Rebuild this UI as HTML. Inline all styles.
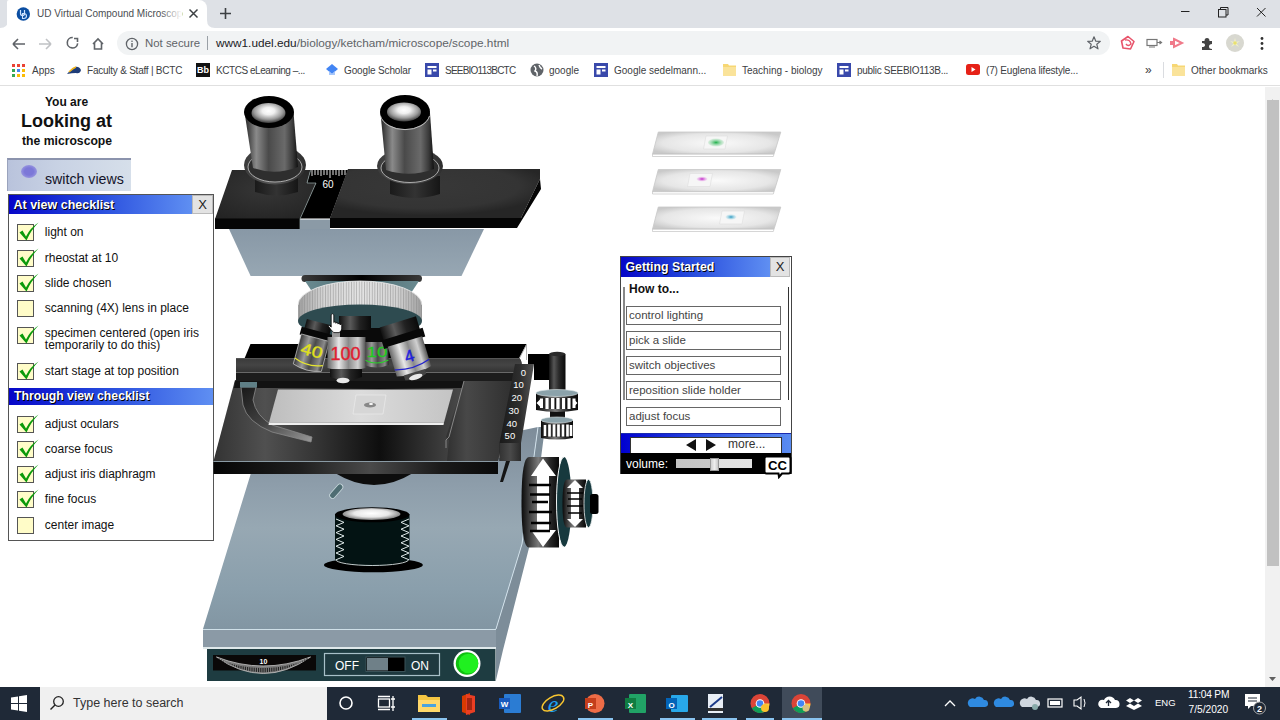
<!DOCTYPE html>
<html><head><meta charset="utf-8">
<style>
*{margin:0;padding:0;box-sizing:border-box}
html,body{width:1280px;height:720px;overflow:hidden;background:#fff;font-family:"Liberation Sans",sans-serif;position:relative}
.abs{position:absolute}
#tabstrip{left:0;top:0;width:1280px;height:28px;background:#dee1e6}
#tab{left:7px;top:0px;width:200px;height:29px;background:#fff;border-radius:2px 8px 0 0}
#toolbar{left:0;top:28px;width:1280px;height:30px;background:#fff}
#omni{left:117px;top:31px;width:993px;height:24px;background:#f1f3f4;border-radius:12px}
#bm{left:0;top:58px;width:1280px;height:28px;background:#fff;border-bottom:1px solid #e0e0e0}
.t{position:absolute;white-space:nowrap;line-height:1}
.bmt{font-size:10px;color:#3c4043;top:65.7px}
#page{left:0;top:87px;width:1280px;height:600px;background:#fff}
#taskbar{left:0;top:687px;width:1280px;height:33px;background:#1f2937}
.panel{position:absolute;background:#fff;border:1px solid #555}
.hdr{position:absolute;background:linear-gradient(90deg,#0606c8 0%,#2448dc 45%,#5f8ff2 100%);color:#fff;font-weight:bold;font-size:12px;text-shadow:1px 1px 0.5px #000;line-height:14px}
.xbtn{position:absolute;background:#e3e3e3;border:1px solid #bbb;color:#222;font-size:13px;text-align:center}
.row{position:absolute;left:44.8px;font-size:12px;color:#111;line-height:12.5px;white-space:nowrap}
.cb{position:absolute;left:17px;width:17px;height:17px;background:#fffcc8;border:1.5px solid #555}
.htbtn{position:absolute;left:626px;width:155px;height:19px;border:1px solid #666;background:#fff;font-size:11.5px;color:#444;padding-left:2px;line-height:17px;white-space:nowrap}
</style></head><body>
<div id="page" class="abs"></div>
<!-- ===== CHROME ===== -->
<div id="tabstrip" class="abs"></div>
<div id="tab" class="abs"></div>
<svg class="abs" style="left:0;top:20px" width="8" height="8"><path d="M0 8 L8 8 L8 0 Q8 8 0 8Z" fill="#fff"/></svg>
<svg class="abs" style="left:207px;top:20px" width="8" height="8"><path d="M0 0 Q0 8 8 8 L0 8Z" fill="#fff"/></svg>
<svg class="abs" style="left:16px;top:6.5px" width="15" height="15"><circle cx="7.3" cy="7" r="6.7" fill="#0b4ea2"/><path d="M4.5 3V6.5Q4.5 8.5 6.5 8.5Q8.5 8.5 8.5 6.5V3" fill="none" stroke="#cfe3ff" stroke-width="1.2"/><path d="M6.5 6.5V11.5H7.5Q10.5 11.5 10.5 9Q10.5 6.5 7.5 6.5Z" fill="none" stroke="#cfe3ff" stroke-width="1.1"/></svg>
<div class="t" style="left:37px;top:9.3px;font-size:10px;color:#4a4d52;width:146px;overflow:hidden">UD Virtual Compound Microscope</div>
<div class="abs" style="left:160px;top:4px;width:22px;height:20px;background:linear-gradient(90deg,rgba(255,255,255,0),#fff)"></div>
<svg class="abs" style="left:188px;top:8px" width="11" height="11"><path d="M1.5 1.5L9.5 9.5M9.5 1.5L1.5 9.5" stroke="#3c4043" stroke-width="1.5"/></svg>
<svg class="abs" style="left:219px;top:7px" width="13" height="13"><path d="M6.5 1V12M1 6.5H12" stroke="#3c4043" stroke-width="1.6"/></svg>
<svg class="abs" style="left:1176px;top:4px" width="104" height="16"><path d="M5 7.5H13.5" stroke="#222" stroke-width="1"/><rect x="42.5" y="5.5" width="7.5" height="7.5" fill="none" stroke="#222" stroke-width="1"/><path d="M44.5 5.5V3.5H52V11H50" fill="none" stroke="#222" stroke-width="1"/><path d="M81 4L89.5 12.5M89.5 4L81 12.5" stroke="#222" stroke-width="1"/></svg>
<div id="toolbar" class="abs"></div>
<svg class="abs" style="left:10px;top:36px" width="100" height="16">
 <path d="M3 8H15M3 8L8 3M3 8L8 13" stroke="#5f6368" stroke-width="1.6" fill="none"/>
 <path d="M29 8H41M41 8L36 3M41 8L36 13" stroke="#c0c2c5" stroke-width="1.6" fill="none"/>
 <path d="M66.5 4.2A5.2 5.2 0 1 0 66.5 11.8" stroke="#5f6368" stroke-width="1.6" fill="none" transform="rotate(-40 61 8)"/>
 <path d="M64 2.5L67.5 2.5L67.5 6" stroke="#5f6368" stroke-width="1.6" fill="none"/>
 <path d="M83 8L88 3L93 8M84.5 7V13H91.5V7" stroke="#5f6368" stroke-width="1.6" fill="none"/>
</svg>
<div id="omni" class="abs"></div>
<svg class="abs" style="left:125px;top:36.5px" width="14" height="14"><circle cx="7" cy="7" r="5.6" fill="none" stroke="#5f6368" stroke-width="1.3"/><path d="M7 6V10.3" stroke="#5f6368" stroke-width="1.4"/><circle cx="7" cy="4.2" r="0.8" fill="#5f6368"/></svg>
<div class="t" style="left:145px;top:38px;font-size:11.4px;color:#5f6368">Not secure</div>
<div class="abs" style="left:207px;top:36px;width:1px;height:14px;background:#9aa0a6"></div>
<div class="t" style="left:216px;top:37.8px;font-size:11.8px;color:#202124;letter-spacing:0">www1.udel.edu<span style="color:#5f6368">/biology/ketcham/microscope/scope.html</span></div>
<svg class="abs" style="left:1086px;top:35px" width="16" height="16"><path d="M8 1.8L9.8 6.2L14.3 6.4L10.8 9.3L12 13.8L8 11.3L4 13.8L5.2 9.3L1.7 6.4L6.2 6.2Z" fill="none" stroke="#5f6368" stroke-width="1.2" stroke-linejoin="round"/></svg>
<svg class="abs" style="left:1118px;top:33px" width="156" height="20">
 <path d="M10 3.5L16 8.5L12.5 16L5 15L3.5 8Z" fill="none" stroke="#e8546b" stroke-width="1.6" stroke-linejoin="round"/><path d="M7 7Q12 6 13 11Q10 14 8 11" fill="none" stroke="#e8546b" stroke-width="1.4"/>
 <rect x="29" y="6.5" width="10" height="6" fill="none" stroke="#777" stroke-width="1.2"/><path d="M31 14H37M39 9.5H43M41.5 8L43.5 9.5L41.5 11" stroke="#777" stroke-width="1.2" fill="none"/>
 <path d="M56 6L64 10L56 14Z" fill="none" stroke="#f07a8a" stroke-width="2"/><rect x="52" y="8" width="4" height="4" fill="#f07a8a"/>
 <path d="M84 8H86.5Q86.5 5 89 5Q91.5 5 91.5 8H94V11Q91 11 91 13.5Q91 16 94 16V17H84V14Q87 14 87 12Q87 10 84 10Z" fill="#444"/>
 <circle cx="117" cy="10" r="9" fill="#d8d8d0"/><path d="M117 5L118 9L122 8L118.5 10.5L121 14L117 11.5L113 14L115.5 10.5L112 8L116 9Z" fill="#f2f2c8"/><circle cx="117" cy="10" r="1.8" fill="#e8e070"/>
 <circle cx="144" cy="5.5" r="1.4" fill="#333"/><circle cx="144" cy="10.5" r="1.4" fill="#333"/><circle cx="144" cy="15.5" r="1.4" fill="#333"/>
</svg>
<div id="bm" class="abs"></div>
<svg class="abs" style="left:12px;top:64px" width="13" height="13">
 <rect x="0" y="0" width="3" height="3" fill="#ea4335"/><rect x="5" y="0" width="3" height="3" fill="#ea4335"/><rect x="10" y="0" width="3" height="3" fill="#ea4335"/>
 <rect x="0" y="5" width="3" height="3" fill="#34a853"/><rect x="5" y="5" width="3" height="3" fill="#4285f4"/><rect x="10" y="5" width="3" height="3" fill="#fbbc05"/>
 <rect x="0" y="10" width="3" height="3" fill="#34a853"/><rect x="5" y="10" width="3" height="3" fill="#fbbc05"/><rect x="10" y="10" width="3" height="3" fill="#fbbc05"/>
</svg>
<div class="t bmt" style="left:32px">Apps</div>
<svg class="abs" style="left:67px;top:65px" width="14" height="10"><path d="M0 9Q4 4 8 2Q12 1 14 5Q13 9 9 8Q5 8 0 9Z" fill="#1e3c78"/><path d="M2 7Q6 3 9 2" stroke="#f2b51d" stroke-width="1.5" fill="none"/></svg>
<div class="t bmt" style="left:87px;letter-spacing:-0.23px">Faculty &amp; Staff | BCTC</div>
<div class="abs" style="left:196px;top:63px;width:14px;height:14px;background:#111;color:#fff;font-size:9px;font-weight:bold;line-height:14px;text-align:center">Bb</div>
<div class="t bmt" style="left:216px;letter-spacing:-0.45px">KCTCS eLearning –...</div>
<svg class="abs" style="left:325px;top:63px" width="14" height="14"><path d="M7 1L13 6L7 11L1 6Z" fill="#4285f4"/><path d="M4 8L7 11L10 8V12H4Z" fill="#a8c7fa"/></svg>
<div class="t bmt" style="left:344px;letter-spacing:-0.14px">Google Scholar</div>
<svg class="abs" style="left:425px;top:63px" width="14" height="14"><rect x="0" y="0" width="14" height="14" fill="#3949ab"/><rect x="2.5" y="3" width="9" height="2" fill="#fff"/><rect x="2.5" y="6.5" width="4" height="5" fill="#fff"/><rect x="8" y="6.5" width="3.5" height="2" fill="#fff"/></svg>
<div class="t bmt" style="left:445px;letter-spacing:-0.77px">SEEBIO113BCTC</div>
<svg class="abs" style="left:530px;top:63px" width="14" height="14"><circle cx="7" cy="7" r="6.5" fill="#5f6368"/><path d="M4 3Q7 5 5 8Q8 9 7 13M9 2Q10 5 12 6" stroke="#fff" stroke-width="1.4" fill="none"/></svg>
<div class="t bmt" style="left:549px">google</div>
<svg class="abs" style="left:594px;top:63px" width="14" height="14"><rect x="0" y="0" width="14" height="14" fill="#3949ab"/><rect x="2.5" y="3" width="9" height="2" fill="#fff"/><rect x="2.5" y="6.5" width="4" height="5" fill="#fff"/><rect x="8" y="6.5" width="3.5" height="2" fill="#fff"/></svg>
<div class="t bmt" style="left:614px">Google sedelmann...</div>
<svg class="abs" style="left:723px;top:63px" width="13" height="14"><path d="M0 1H5L6 2.5H13V13H0Z" fill="#f7d774"/><path d="M0 4H13V13H0Z" fill="#fae39a"/></svg>
<div class="t bmt" style="left:742px">Teaching - biology</div>
<svg class="abs" style="left:837px;top:63px" width="14" height="14"><rect x="0" y="0" width="14" height="14" fill="#3949ab"/><rect x="2.5" y="3" width="9" height="2" fill="#fff"/><rect x="2.5" y="6.5" width="4" height="5" fill="#fff"/><rect x="8" y="6.5" width="3.5" height="2" fill="#fff"/></svg>
<div class="t bmt" style="left:857px;letter-spacing:-0.3px">public SEEBIO113B...</div>
<svg class="abs" style="left:966px;top:64px" width="14" height="11"><rect x="0" y="0" width="14" height="11" rx="2.5" fill="#e62117"/><path d="M5.5 3L9.5 5.5L5.5 8Z" fill="#fff"/></svg>
<div class="t bmt" style="left:986px;letter-spacing:-0.17px">(7) Euglena lifestyle...</div>
<div class="t" style="left:1145px;top:64px;font-size:12px;color:#3c4043">»</div>
<div class="abs" style="left:1163px;top:62px;width:1px;height:16px;background:#dadce0"></div>
<svg class="abs" style="left:1172px;top:63px" width="13" height="14"><path d="M0 1H5L6 2.5H13V13H0Z" fill="#f7d774"/><path d="M0 4H13V13H0Z" fill="#fae39a"/></svg>
<div class="t bmt" style="left:1191px">Other bookmarks</div>
<!-- ===== LEFT PANEL ===== -->
<div class="t" style="left:45px;top:96px;font-size:12px;font-weight:bold;color:#111">You are</div>
<div class="t" style="left:21px;top:112px;font-size:18px;font-weight:bold;color:#111">Looking at</div>
<div class="t" style="left:22px;top:135px;font-size:12.2px;font-weight:bold;color:#111">the microscope</div>
<div class="abs" style="left:7px;top:158px;width:124px;height:33px;background:linear-gradient(90deg,#b9c3dc 0%,#c8d2e4 40%,#d6dfea 100%);border-top:2px solid #8b93ad;border-left:1px solid #9aa3bd"></div>
<div class="abs" style="left:21px;top:165px;width:16px;height:13px;border-radius:50%;background:radial-gradient(#7c78d8 40%,#9a98e0 75%,rgba(180,180,230,0) 100%)"></div>
<div class="t" style="left:45px;top:172px;font-size:14.2px;color:#14142a">switch views</div>

<div class="panel" style="left:8px;top:194px;width:206px;height:347px"></div>
<div class="hdr" style="left:9px;top:195px;width:183px;height:19px;padding:3px 0 0 4.5px;font-size:12.5px">At view checklist</div>
<div class="xbtn" style="left:192px;top:195px;width:21px;height:19px;line-height:17px">X</div>
<div class="hdr" style="left:9px;top:387.5px;width:204px;height:17px;padding:1.5px 0 0 5px;font-size:12.25px">Through view checklist</div>
<div class="cb" style="top:223.5px"></div>
<svg class="abs" style="left:17px;top:219.5px" width="24" height="22"><path d="M2.5 12.5L5.5 10.5L9 16.5Q13 8 21.5 2.5Q14 10 9.5 20.5Z" fill="#0a9a0a"/></svg>
<div class="row" style="top:225.7px">light on</div>
<div class="cb" style="top:249.5px"></div>
<svg class="abs" style="left:17px;top:245.5px" width="24" height="22"><path d="M2.5 12.5L5.5 10.5L9 16.5Q13 8 21.5 2.5Q14 10 9.5 20.5Z" fill="#0a9a0a"/></svg>
<div class="row" style="top:251.7px">rheostat at 10</div>
<div class="cb" style="top:274.5px"></div>
<svg class="abs" style="left:17px;top:270.5px" width="24" height="22"><path d="M2.5 12.5L5.5 10.5L9 16.5Q13 8 21.5 2.5Q14 10 9.5 20.5Z" fill="#0a9a0a"/></svg>
<div class="row" style="top:276.7px">slide chosen</div>
<div class="cb" style="top:299.5px"></div>
<div class="row" style="top:301.7px">scanning (4X) lens in place</div>
<div class="cb" style="top:326.5px"></div>
<svg class="abs" style="left:17px;top:322.5px" width="24" height="22"><path d="M2.5 12.5L5.5 10.5L9 16.5Q13 8 21.5 2.5Q14 10 9.5 20.5Z" fill="#0a9a0a"/></svg>
<div class="row" style="top:326.5px">specimen centered (open iris<br>temporarily to do this)</div>
<div class="cb" style="top:362.5px"></div>
<svg class="abs" style="left:17px;top:358.5px" width="24" height="22"><path d="M2.5 12.5L5.5 10.5L9 16.5Q13 8 21.5 2.5Q14 10 9.5 20.5Z" fill="#0a9a0a"/></svg>
<div class="row" style="top:364.7px">start stage at top position</div>
<div class="cb" style="top:415.5px"></div>
<svg class="abs" style="left:17px;top:411.5px" width="24" height="22"><path d="M2.5 12.5L5.5 10.5L9 16.5Q13 8 21.5 2.5Q14 10 9.5 20.5Z" fill="#0a9a0a"/></svg>
<div class="row" style="top:417.7px">adjust oculars</div>
<div class="cb" style="top:440.5px"></div>
<svg class="abs" style="left:17px;top:436.5px" width="24" height="22"><path d="M2.5 12.5L5.5 10.5L9 16.5Q13 8 21.5 2.5Q14 10 9.5 20.5Z" fill="#0a9a0a"/></svg>
<div class="row" style="top:442.7px">coarse focus</div>
<div class="cb" style="top:465.5px"></div>
<svg class="abs" style="left:17px;top:461.5px" width="24" height="22"><path d="M2.5 12.5L5.5 10.5L9 16.5Q13 8 21.5 2.5Q14 10 9.5 20.5Z" fill="#0a9a0a"/></svg>
<div class="row" style="top:467.7px">adjust iris diaphragm</div>
<div class="cb" style="top:491.0px"></div>
<svg class="abs" style="left:17px;top:487.0px" width="24" height="22"><path d="M2.5 12.5L5.5 10.5L9 16.5Q13 8 21.5 2.5Q14 10 9.5 20.5Z" fill="#0a9a0a"/></svg>
<div class="row" style="top:493.2px">fine focus</div>
<div class="cb" style="top:516.5px"></div>
<div class="row" style="top:518.7px">center image</div>
<!-- ===== MICROSCOPE ===== -->
<svg class="abs" style="left:195px;top:88px" width="420" height="599" viewBox="195 88 420 599">
<defs>
 <linearGradient id="baseTop" x1="0" y1="0" x2="0" y2="1">
  <stop offset="0" stop-color="#7d8c99"/><stop offset="0.3" stop-color="#8e9eab"/><stop offset="0.5" stop-color="#97a8b3"/><stop offset="0.8" stop-color="#8a9fac"/><stop offset="1" stop-color="#8296a3"/>
 </linearGradient>
 <linearGradient id="bodyG" x1="0" y1="0" x2="0" y2="1"><stop offset="0" stop-color="#8898a6"/><stop offset="1" stop-color="#97a7b3"/></linearGradient>
 <linearGradient id="eyeBody" x1="0" y1="0" x2="1" y2="0">
  <stop offset="0" stop-color="#222"/><stop offset="0.22" stop-color="#8a8a8a"/><stop offset="0.45" stop-color="#4a4a4a"/><stop offset="0.75" stop-color="#6a6a6a"/><stop offset="0.9" stop-color="#3a3a3a"/><stop offset="1" stop-color="#111"/>
 </linearGradient>
 <radialGradient id="eyeIn" cx="0.5" cy="0.4" r="0.6"><stop offset="0" stop-color="#ffffff"/><stop offset="0.3" stop-color="#f0f0f0"/><stop offset="0.7" stop-color="#9a9a9a"/><stop offset="1" stop-color="#3a3a3a"/></radialGradient>
 <radialGradient id="headTop" cx="0.5" cy="0.4" r="0.7"><stop offset="0" stop-color="#363636"/><stop offset="1" stop-color="#242424"/></radialGradient>
 <radialGradient id="headTop2" cx="0.45" cy="0.35" r="0.6"><stop offset="0" stop-color="#383838"/><stop offset="0.75" stop-color="#343434"/><stop offset="1" stop-color="#262626"/></radialGradient>
 <linearGradient id="eyeLow" x1="0" y1="0" x2="1" y2="0"><stop offset="0" stop-color="#1a1a1a"/><stop offset="0.5" stop-color="#333"/><stop offset="1" stop-color="#161616"/></linearGradient>
 <linearGradient id="stageTop" x1="0" y1="0" x2="1" y2="0">
  <stop offset="0" stop-color="#333"/><stop offset="0.17" stop-color="#505050"/><stop offset="0.35" stop-color="#333"/><stop offset="0.55" stop-color="#0e0e0e"/><stop offset="0.81" stop-color="#484848"/><stop offset="1" stop-color="#2e2e2e"/>
 </linearGradient>
 <linearGradient id="stageFace" x1="0" y1="0" x2="1" y2="0">
  <stop offset="0" stop-color="#050505"/><stop offset="0.3" stop-color="#1e1e1e"/><stop offset="0.55" stop-color="#4a4a4a"/><stop offset="0.8" stop-color="#1a1a1a"/><stop offset="1" stop-color="#0a0a0a"/>
 </linearGradient>
 <linearGradient id="rail" x1="0" y1="0" x2="0" y2="1">
  <stop offset="0" stop-color="#3a3a3a"/><stop offset="0.5" stop-color="#444"/><stop offset="1" stop-color="#333"/>
 </linearGradient>
 <linearGradient id="objSilver" x1="0" y1="0" x2="1" y2="0">
  <stop offset="0" stop-color="#666"/><stop offset="0.3" stop-color="#e8e8e8"/><stop offset="0.55" stop-color="#8a8a8a"/><stop offset="0.8" stop-color="#d0d0d0"/><stop offset="1" stop-color="#555"/>
 </linearGradient>
 <linearGradient id="objDark" x1="0" y1="0" x2="1" y2="0">
  <stop offset="0" stop-color="#111"/><stop offset="0.35" stop-color="#5a5a5a"/><stop offset="0.65" stop-color="#222"/><stop offset="1" stop-color="#0a0a0a"/>
 </linearGradient>
 <linearGradient id="slideG" x1="0" y1="0" x2="1" y2="0">
  <stop offset="0" stop-color="#bdbdbd"/><stop offset="0.5" stop-color="#dcdcdc"/><stop offset="1" stop-color="#c4c4c4"/>
 </linearGradient>
 <linearGradient id="ringDark" x1="0" y1="0" x2="1" y2="0"><stop offset="0" stop-color="#3a3a3a"/><stop offset="0.5" stop-color="#000"/><stop offset="1" stop-color="#3a3a3a"/></linearGradient>
 <linearGradient id="tealG" x1="0" y1="0" x2="1" y2="0"><stop offset="0" stop-color="#6a8a90"/><stop offset="0.5" stop-color="#4f6e74"/><stop offset="1" stop-color="#6a8a90"/></linearGradient>
 <linearGradient id="objSilver2" x1="0" y1="0" x2="1" y2="0"><stop offset="0" stop-color="#3a3a3a"/><stop offset="0.3" stop-color="#9a9a9a"/><stop offset="0.55" stop-color="#4a4a4a"/><stop offset="0.85" stop-color="#8a8a8a"/><stop offset="1" stop-color="#2a2a2a"/></linearGradient>
 <linearGradient id="plateG" x1="0" y1="0" x2="1" y2="0"><stop offset="0" stop-color="#303030"/><stop offset="0.3" stop-color="#484848"/><stop offset="1" stop-color="#2e2e2e"/></linearGradient>
 <linearGradient id="armG" x1="0" y1="0" x2="1" y2="1"><stop offset="0" stop-color="#181818"/><stop offset="0.5" stop-color="#444"/><stop offset="1" stop-color="#9a9a9a"/></linearGradient>
 <linearGradient id="colG" x1="0" y1="0" x2="1" y2="0"><stop offset="0" stop-color="#1a1a1a"/><stop offset="0.6" stop-color="#2e2e2e"/><stop offset="1" stop-color="#555"/></linearGradient>
 <linearGradient id="knobBand2" x1="0" y1="0" x2="1" y2="0"><stop offset="0" stop-color="#0a0a0a"/><stop offset="0.45" stop-color="#7a7a7a"/><stop offset="0.75" stop-color="#2a2a2a"/><stop offset="1" stop-color="#080808"/></linearGradient>
 <linearGradient id="collarG" x1="0" y1="0" x2="1" y2="0"><stop offset="0" stop-color="#3a3a3a"/><stop offset="0.4" stop-color="#555"/><stop offset="1" stop-color="#2e2e2e"/></linearGradient>
 <linearGradient id="colG2" x1="0" y1="0" x2="1" y2="0"><stop offset="0" stop-color="#333"/><stop offset="0.5" stop-color="#4a4a4a"/><stop offset="1" stop-color="#2a2a2a"/></linearGradient>
 <linearGradient id="knurl" x1="0" y1="0" x2="1" y2="0">
  <stop offset="0" stop-color="#a0a0a0"/><stop offset="0.2" stop-color="#d4d4d4"/><stop offset="0.5" stop-color="#e4e4e4"/><stop offset="0.8" stop-color="#d4d4d4"/><stop offset="1" stop-color="#a0a0a0"/>
 </linearGradient>
 <pattern id="ridges" width="2.6" height="40" patternUnits="userSpaceOnUse"><rect x="0" width="0.9" height="40" fill="#8a8a8a" opacity="0.55"/></pattern>
 <radialGradient id="illumIn" cx="0.5" cy="0.45" r="0.55"><stop offset="0" stop-color="#fff"/><stop offset="0.55" stop-color="#e8e8e8"/><stop offset="1" stop-color="#777"/></radialGradient>
 <linearGradient id="knobBand" x1="0" y1="0" x2="1" y2="0"><stop offset="0" stop-color="#111"/><stop offset="0.3" stop-color="#555"/><stop offset="0.6" stop-color="#2a2a2a"/><stop offset="1" stop-color="#0a0a0a"/></linearGradient>
</defs>

<!-- BASE -->
<path d="M251 473H496V458H519L519 431L538 427L522 544L496 629H203Z" fill="url(#baseTop)"/>
<path d="M203 629H496V648H203Z" fill="#8b9aa6"/>
<path d="M203 629.5H496" stroke="#cfe0e8" stroke-width="1"/>
<path d="M538 427L545 427L530 544L503 650L496 680L496 629L522 544Z" fill="#7d8d99"/>
<path d="M538 427L522 544L496 629" fill="none" stroke="#d0e0ea" stroke-width="1"/>
<path d="M203 647H496V649H203Z" fill="#dfe8ea"/>
<path d="M207 649H495.5V681H207Z" fill="#1e3c41"/>
<!-- rheostat -->
<rect x="213" y="655" width="103" height="15.5" fill="#0a0808"/>
<path d="M216.5 657Q263 675 310.5 657Q263 690 216.5 657Z" fill="#7a7a7a" stroke="#b8b8b8" stroke-width="0.9"/>
<path d="M219.0 660.1V658.2M221.2 660.9V659.5M223.4 661.6V660.8M225.6 662.3V662.1M227.8 663.0V663.2M230.0 663.6V664.3M232.2 664.1V665.3M234.4 664.7V666.3M236.6 665.2V667.2M238.8 665.6V668.0M241.0 666.0V668.7M243.2 666.4V669.4M245.4 666.7V670.0M247.6 667.0V670.5M249.8 667.3V670.9M252.0 667.5V671.3M254.2 667.7V671.6M256.4 667.8V671.9M258.6 667.9V672.1M260.8 668.0V672.2M263.0 668.0V672.2M265.2 668.0V672.2M267.4 667.9V672.1M269.6 667.8V671.9M271.8 667.7V671.6M274.0 667.5V671.3M276.2 667.3V670.9M278.4 667.0V670.5M280.6 666.7V670.0M282.8 666.4V669.4M285.0 666.0V668.7M287.2 665.6V668.0M289.4 665.2V667.2M291.6 664.7V666.3M293.8 664.1V665.3M296.0 663.6V664.3M298.2 663.0V663.2M300.4 662.3V662.1M302.6 661.6V660.8M304.8 660.9V659.5M307.0 660.1V658.2" stroke="#111" stroke-width="0.9"/>
<text x="263.5" y="663.5" font-family="Liberation Sans" font-weight="bold" font-size="7" fill="#fff" text-anchor="middle">10</text>
<!-- switch -->
<rect x="324.5" y="653.5" width="115" height="22" fill="#1e393f" stroke="#a8c0c8" stroke-width="1.2"/>
<text x="347" y="669.5" font-family="Liberation Sans" font-size="12" fill="#fff" text-anchor="middle">OFF</text>
<rect x="366" y="657" width="39" height="14.5" fill="#000" stroke="#3a5258" stroke-width="1"/>
<rect x="367" y="658" width="21" height="12.5" fill="#6f8088"/>
<text x="420" y="669.5" font-family="Liberation Sans" font-size="12" fill="#fff" text-anchor="middle">ON</text>
<circle cx="467" cy="663.5" r="13.5" fill="#fff"/><circle cx="467" cy="663.5" r="11.2" fill="#10c010"/><circle cx="468.5" cy="663.5" r="9.8" fill="#20f020"/>

<!-- ILLUMINATOR -->
<ellipse cx="373.4" cy="565" rx="49.4" ry="7.2" fill="#000"/>
<path d="M335 514H409.5V560Q372 571 335 560Z" fill="#031313"/>
<path d="M335.7 559.5A36.5 6 0 0 0 408.7 559.5" fill="none" stroke="#d8e4e4" stroke-width="0.9"/>
<path d="M336 519L344 522.4L336 525.8L344 529.2L336 532.6L344 536.0L336 539.4L344 542.8L336 546.2L344 549.6L336 553.0L344 556.4L336 559.8" fill="none" stroke="#e0eaea" stroke-width="1"/>
<path d="M409 519L401 522.4L409 525.8L401 529.2L409 532.6L401 536.0L409 539.4L401 542.8L409 546.2L401 549.6L409 553.0L401 556.4L409 559.8" fill="none" stroke="#e0eaea" stroke-width="1"/>
<ellipse cx="372.2" cy="514.7" rx="37.2" ry="7.5" fill="#000"/>
<ellipse cx="371.5" cy="514" rx="29" ry="6" fill="url(#illumIn)"/>

<!-- CONDENSER -->
<path d="M335 473H413Q374 497 335 473Z" fill="#0d0d0d"/>
<path d="M332.5 495.5L340 487" stroke="#c8d8dc" stroke-width="6.5" stroke-linecap="round"/><path d="M332.5 495.5L340 487" stroke="#4f6d73" stroke-width="5" stroke-linecap="round"/>

<!-- STAGE -->
<path d="M250.5 344H526.5L519 358.5H244.5Z" fill="#000"/>
<path d="M526.5 344.5L519 359M526.5 344.5V360" stroke="#a0a0a0" stroke-width="0.8"/>
<path d="M235 380H516L498 461H213.5Z" fill="url(#stageTop)"/>
<path d="M213.5 461.5H498" stroke="#8a9aa4" stroke-width="1.2"/>
<path d="M213.5 462H498V474H213.5Z" fill="url(#stageFace)"/>
<!-- rail -->
<path d="M236 358H518Q522 358 522 369.5Q522 381 518 381H236Z" fill="#1c1c1c"/>
<path d="M236 358H518Q521.5 358 521.8 365L522 372H236Z" fill="url(#rail)"/>
<path d="M236 358.6H520" stroke="#5a5a5a" stroke-width="1"/>
<path d="M236 372.5H521" stroke="#686868" stroke-width="1.2"/>
<path d="M235 381H516L515 388H234Z" fill="#121212"/>
<!-- right raised plate -->
<path d="M464 381H515L498 461H447L449 440L446 437Z" fill="url(#plateG)"/>
<path d="M464 381L449 437L446 440V448" fill="none" stroke="#909090" stroke-width="0.9"/>
<!-- slide holder arm -->
<path d="M241 387L256 387L253 400Q256 416 272 425L312 437L311 442L272 432Q247 422 243 405Z" fill="url(#armG)" stroke="#8a8a8a" stroke-width="0.8"/>
<path d="M240 382H257V387.5H240Z" fill="#5f7f86"/>
<!-- slide -->
<path d="M278 389.5H453L444 422.5H269Z" fill="url(#slideG)"/>
<path d="M269 422.5H444L443.5 425H268.5Z" fill="#efefef"/>
<path d="M356 395H386L383 414H353Z" fill="#d6d6d6" stroke="#eee" stroke-width="0.6"/>
<ellipse cx="370" cy="405" rx="6" ry="2.5" fill="#888"/><ellipse cx="371" cy="404" rx="2" ry="1" fill="#fff"/>
<!-- scale column -->
<path d="M515 364H534L521 443V461H499.5V443Z" fill="url(#colG)"/>
<path d="M499.5 443H521V461H499.5Z" fill="url(#colG2)"/><path d="M506 461L510 461L503 482H500Z" fill="#151515"/>
<g font-family="Liberation Sans" font-size="9.5" fill="#fff" text-anchor="middle">
 <text x="523.5" y="375.5">0</text><text x="518.6" y="388">10</text><text x="516.7" y="400.5">20</text><text x="513.7" y="413.5">30</text><text x="511.8" y="426.5">40</text><text x="509.9" y="438.5">50</text>
</g>
<!-- mech stage connector + post -->
<path d="M528 354H551V380H534V364H528Z" fill="#000"/>
<rect x="549" y="354" width="16.5" height="38" fill="url(#knobBand)"/>
<ellipse cx="557.2" cy="354" rx="8.2" ry="2.2" fill="#2a2a2a"/>
<!-- stage knobs -->
<g>
 <rect x="550" y="410" width="15" height="10" fill="#111"/>
 <path d="M536 393H578V410Q557 414 536 410Z" fill="url(#knobBand2)"/>
 <ellipse cx="557" cy="393" rx="21" ry="3.5" fill="#8ba2aa" stroke="#dfe8ea" stroke-width="0.6"/>
 <path d="M541.5 398.5V408M547 398V409M552.5 398V409M558 398V409M563.5 398V409M569 398V409M574 398.5V408" stroke="#fff" stroke-width="3"/>
 <path d="M544 398V409M550 398V409M555.5 398V409M561 398V409M566.5 398V409M571.5 398V409" stroke="#111" stroke-width="1"/>
 <path d="M536.5 403L540 399.5V406.5Z M577.5 403L574 399.5V406.5Z" fill="#fff"/>
 <path d="M541 420H573V438Q557 441 541 438Z" fill="url(#knobBand2)"/>
 <ellipse cx="557" cy="420" rx="16" ry="3" fill="#8ba2aa" stroke="#dfe8ea" stroke-width="0.6"/>
 <path d="M545 425V436M549.5 424.5V436.5M554 424.5V436.5M558.5 424.5V436.5M563 424.5V436.5M567.5 424.5V436.5M571 425V436" stroke="#fff" stroke-width="2.6"/>
 <path d="M547.2 424V437M551.8 424V437M556.3 424V437M560.8 424V437M565.3 424V437" stroke="#111" stroke-width="0.9"/>
</g>
<!-- FOCUS KNOBS -->
<g>
 <path d="M529 457H559V547.5H529Q521.5 547.5 521.5 502Q521.5 457 529 457Z" fill="url(#knobBand2)"/>
 <ellipse cx="564" cy="502" rx="7.5" ry="45" fill="#17393e"/>
 <path d="M564 457A7.5 45 0 0 0 564 547" fill="none" stroke="#f0f4f4" stroke-width="1"/>
 <path d="M531 476L543 458.5L556 476H549V530H556L543 547L531 530H537V476Z" fill="#fff"/>
 <path d="M529 485H551M530 494.5H550M532 502H548M529 512H552M531 523H551M530 531H550" stroke="#000" stroke-width="2.4"/>
 <path d="M567 479.5H586V527.5H567Q562.5 527.5 562.5 503.5Q562.5 479.5 567 479.5Z" fill="url(#knobBand2)"/>
 <ellipse cx="588.5" cy="503.5" rx="4.5" ry="24" fill="#17393e" stroke="#e8eeee" stroke-width="0.8"/>
 <path d="M567 488L575 480L583 488H579V519H583L575 527L567 519H571V488Z" fill="#fff"/>
 <path d="M567 493H583M568 499H582M567 506H583M568 513H582" stroke="#000" stroke-width="1.6"/>
 <rect x="590" y="494" width="8.5" height="20" rx="2.5" fill="#000"/>
</g>

<!-- BODY -->
<path d="M229 229H484L461.5 276H250.6Z" fill="url(#bodyG)"/>
<!-- NOSEPIECE -->
<rect x="301.5" y="275" width="120.5" height="7" rx="3.5" fill="url(#ringDark)"/>
<path d="M305 281H419L411 293H313Z" fill="url(#tealG)"/>
<path d="M298 305A62 24 0 0 1 422 305V321H298Z" fill="url(#knurl)"/>
<path d="M298 305A62 24 0 0 1 422 305V321H298Z" fill="url(#ridges)"/>
<path d="M298 305A62 24 0 0 1 422 305" fill="none" stroke="#eee" stroke-width="0.8"/>
<ellipse cx="360" cy="321" rx="62" ry="16.5" fill="#2e4b50"/>
<!-- OBJECTIVES -->
<!-- 10 (back) -->
<g>
 <path d="M362 328H392V343H362Z" fill="#0a0a0a"/>
 <path d="M364.5 342H388.5V365Q376.5 370 364.5 365Z" fill="url(#objSilver2)"/>
 <path d="M364.5 360Q376.5 366 388.5 360" fill="none" stroke="#2ad02a" stroke-width="1.1"/>
 <text x="377" y="357" font-family="Liberation Sans" font-size="15" fill="#22c822" stroke="#22c822" stroke-width="0.3" text-anchor="middle" textLength="21" lengthAdjust="spacingAndGlyphs">10</text>
</g>
<!-- 40 -->
<g transform="rotate(15 311 350)">
 <path d="M299 321H325V331H299Z" fill="url(#objDark)"/>
 <path d="M296 330H328V338H296Z" fill="#080808"/>
 <path d="M297.5 337H326.5V368Q312 373 297.5 368Z" fill="url(#objSilver2)"/>
 <path d="M297.5 337H326.5V368Q312 373 297.5 368Z" fill="none" stroke="#ddd" stroke-width="0.6"/>
 <path d="M297.5 362Q312 368 326.5 362" fill="none" stroke="#e8e830" stroke-width="1.2"/>
 <text x="312" y="356" font-family="Liberation Sans" font-size="16" fill="#e0e020" stroke="#e0e020" stroke-width="0.35" text-anchor="middle" textLength="22" lengthAdjust="spacingAndGlyphs">40</text>
</g>
<!-- 4 -->
<g transform="rotate(-17 409 355)">
 <path d="M389 320H427V334H389Z" fill="url(#objDark)"/>
 <path d="M387 333H430V342H387Z" fill="#080808"/>
 <path d="M391 341H427V372Q409 377 391 372Z" fill="url(#objSilver)"/>
 <path d="M391 365Q409 371 427 365" fill="none" stroke="#2222cc" stroke-width="1.3"/>
 <path d="M398 373H420V378Q409 382 398 378Z" fill="#444"/>
 <ellipse cx="409" cy="378" rx="7" ry="2.5" fill="#e8e8e8"/>
 <text x="409" y="362" font-family="Liberation Sans" font-size="17" fill="#2020dd" stroke="#2020dd" stroke-width="0.4" text-anchor="middle">4</text>
</g>
<!-- 100 -->
<g>
 <path d="M339 316H371V331H339Z" fill="url(#objDark)"/>
 <path d="M332 330H371V338H332Z" fill="#0a0a0a"/>
 <path d="M332 330H340V338H332Z" fill="#9a9a9a"/>
 <path d="M327.5 337H365.5V368Q346.5 374 327.5 368Z" fill="url(#objSilver)"/>
 <path d="M330 369H362V377Q346 384 330 377Z" fill="url(#objDark)"/>
 <ellipse cx="343" cy="380.5" rx="6.5" ry="2.8" fill="#eaeaea"/>
 <text x="345.5" y="359.5" font-family="Liberation Sans" font-size="19" fill="#e02030" stroke="#e02030" stroke-width="0.4" text-anchor="middle" textLength="30" lengthAdjust="spacingAndGlyphs">100</text>
</g>

<!-- HEAD -->
<path d="M232 170H310.5L307 183H316L300 219H215Z" fill="url(#headTop)"/>
<path d="M215 218.5H300V229H215Z" fill="#050505"/>
<path d="M310.5 170H348L330 218.5H300L316 183H307Z" fill="#000"/>
<path d="M310.5 170.5L307 183H316L300 219V229" fill="none" stroke="#9aa" stroke-width="0.7"/>
<path d="M348 169H540V179L521 218H330Z" fill="url(#headTop2)"/>
<path d="M330 218H521L540 179L541 189L517 228H330Z" fill="#050505"/>
<path d="M300 219.5H330V229H300Z" fill="#8b9aa6"/>
<path d="M312 170V176M315 170V175M318 170V175M321 170V176M324 170V175M327 170V175M330 170V178M333 170V175M336 170V175M339 170V176M342 170V175M345 170V175" stroke="#fff" stroke-width="0.9"/>
<text x="328" y="188" font-family="Liberation Sans" font-size="10" fill="#fff" text-anchor="middle">60</text>
<!-- left eyepiece -->
<path d="M255 176H298V192Q276.5 199 255 192Z" fill="url(#eyeLow)"/>
<ellipse cx="275" cy="165" rx="31" ry="19.5" fill="url(#collarG)"/>
<ellipse cx="275" cy="167" rx="27" ry="15" fill="#2e2e2e" stroke="#c8c8c8" stroke-width="0.8"/>
<path d="M244.5 112L253 168Q275 176 298 167L293.5 112Z" fill="url(#eyeBody)"/>
<ellipse cx="269" cy="112" rx="25" ry="16" fill="#000"/>
<ellipse cx="268.5" cy="113" rx="17" ry="10" fill="url(#eyeIn)"/>
<!-- right eyepiece -->
<path d="M390 176H440V194Q415 202 390 194Z" fill="url(#eyeLow)"/>
<ellipse cx="410" cy="166" rx="33" ry="18" fill="url(#collarG)"/>
<ellipse cx="410" cy="168" rx="29" ry="14.5" fill="#2e2e2e" stroke="#c8c8c8" stroke-width="0.8"/>
<path d="M380.5 113L386 170Q410 178 434 169L430 113Z" fill="url(#eyeBody)"/>
<ellipse cx="405" cy="112" rx="25" ry="17" fill="#000"/>
<path d="M380.5 116A25 17 0 0 0 429.5 116" fill="none" stroke="#ccc" stroke-width="0.9"/>
<ellipse cx="404" cy="112" rx="17" ry="9.5" fill="url(#eyeIn)"/>
<!-- cursor -->
<g transform="translate(332.5 313.5) scale(1.3) translate(-332.5 -313.5)"><path d="M331.5 314.5Q332.5 313 333.5 314.5V320.5Q334.2 319.5 335 320V321Q335.8 320 336.6 320.6V321.5Q337.4 320.8 338.2 321.4V322Q339.2 321.5 339.6 322.5V325.5Q339.2 327.5 337.5 328.2H333.5Q331.5 326.5 329.5 323.5Q329 322.5 330 322.5L331.5 324Z" fill="#fff" stroke="#000" stroke-width="0.6"/></g>
</svg>
<!-- ===== SLIDES ===== -->
<svg class="abs" style="left:645px;top:125px" width="145" height="115">
 <defs>
  <radialGradient id="sg" cx="50%" cy="50%" r="60%"><stop offset="0" stop-color="#fafafa"/><stop offset="0.7" stop-color="#e6e6e6"/><stop offset="1" stop-color="#c9c9c9"/></radialGradient>
  <radialGradient id="mg"><stop offset="0" stop-color="#c020c8"/><stop offset="1" stop-color="#e8a0e8" stop-opacity="0.2"/></radialGradient>
  <radialGradient id="cg"><stop offset="0" stop-color="#2a98c0"/><stop offset="1" stop-color="#a0d8e8" stop-opacity="0.2"/></radialGradient>
  <radialGradient id="gg"><stop offset="0" stop-color="#1fb04a"/><stop offset="1" stop-color="#9fdcb0" stop-opacity="0.3"/></radialGradient>
 </defs>
 <g transform="translate(0,0)">
  <path d="M13.3 7H135.8L129 29.2H7.5Z" fill="url(#sg)" stroke="#c8c8c8" stroke-width="0.8"/>
  <path d="M7.5 29.2H129L128.3 31.5H7.5Z" fill="#fff" stroke="#bbb" stroke-width="0.6"/>
  <path d="M61 11H82.5L80 24H58.5Z" fill="#f6f6f6" stroke="#ddd" stroke-width="0.6"/>
  <ellipse cx="71" cy="17.5" rx="8" ry="4" fill="url(#gg)"/>
 </g>
 <g transform="translate(0,37.5)">
  <path d="M13.3 7H135.8L129 29.2H7.5Z" fill="url(#sg)" stroke="#c8c8c8" stroke-width="0.8"/>
  <path d="M7.5 29.2H129L128.3 31.5H7.5Z" fill="#fff" stroke="#bbb" stroke-width="0.6"/>
  <path d="M45 11H67.5L65 24H42.5Z" fill="#f6f6f6" stroke="#ddd" stroke-width="0.6"/>
  <ellipse cx="57" cy="16.5" rx="5.5" ry="2.5" fill="url(#mg)"/>
 </g>
 <g transform="translate(0,75)">
  <path d="M13.3 7H135.8L129 29.2H7.5Z" fill="url(#sg)" stroke="#c8c8c8" stroke-width="0.8"/>
  <path d="M7.5 29.2H129L128.3 31.5H7.5Z" fill="#fff" stroke="#bbb" stroke-width="0.6"/>
  <path d="M77 11H99.5L97 24H74.5Z" fill="#f6f6f6" stroke="#ddd" stroke-width="0.6"/>
  <ellipse cx="86" cy="17" rx="5.5" ry="2.8" fill="url(#cg)"/>
 </g>
</svg>
<!-- ===== GETTING STARTED ===== -->
<div class="panel" style="left:620px;top:256px;width:172px;height:218px;border-color:#444"></div>
<div class="hdr" style="left:621px;top:257px;width:149px;height:20px;padding:2.5px 0 0 4.5px;font-size:12.3px">Getting Started</div>
<div class="xbtn" style="left:770px;top:257px;width:20px;height:20px;line-height:18px">X</div>
<div class="abs" style="left:622.5px;top:287px;width:2.5px;height:113px;background:#888"></div>
<div class="abs" style="left:787.5px;top:287px;width:1.5px;height:113px;background:#333"></div>
<div class="t" style="left:629px;top:283px;font-size:12px;font-weight:bold;color:#111">How to...</div>
<div class="htbtn" style="top:306px">control lighting</div>
<div class="htbtn" style="top:330.5px">pick a slide</div>
<div class="htbtn" style="top:355.5px">switch objectives</div>
<div class="htbtn" style="top:381px">reposition slide holder</div>
<div class="htbtn" style="top:406.5px">adjust focus</div>
<div class="abs" style="left:621px;top:433px;width:170px;height:20px;background:linear-gradient(90deg,#0000d0,#2c50e0 50%,#5a8cf2);border-top:1.5px solid #1a2ab0"></div>
<div class="abs" style="left:630px;top:437px;width:152px;height:16px;background:#fff;border:1px solid #333;border-bottom:none"></div>
<svg class="abs" style="left:684px;top:438px" width="34" height="14"><path d="M2 7L12 1V13Z M22 1L32 7L22 13Z" fill="#111"/></svg>
<div class="t" style="left:728px;top:438px;font-size:12px;color:#333">more...</div>
<div class="abs" style="left:621px;top:453px;width:170px;height:21px;background:#000"></div>
<div class="t" style="left:626px;top:458px;font-size:12px;color:#fff">volume:</div>
<div class="abs" style="left:676px;top:459px;width:76px;height:9px;background:linear-gradient(90deg,#c4c4c4 0%,#c8c8c8 45%,#e0e0e0 46%,#e2e2e2 100%)"></div>
<div class="abs" style="left:709.5px;top:457.5px;width:9px;height:13px;background:linear-gradient(90deg,#d0d0d0,#eee,#c8c8c8);border:1px solid #999"></div>
<svg class="abs" style="left:763px;top:455px" width="30" height="24"><path d="M2.5 1.5H25.5Q27.5 1.5 27.5 3.5V16.5Q27.5 18.5 25.5 18.5H19L16 22L15.5 18.5H3.5Q1.5 18.5 1.5 16.5V3.5Q1.5 1.5 3.5 1.5Z" fill="#fff" stroke="#000" stroke-width="2"/><text x="14.5" y="15" font-family="Liberation Sans" font-weight="bold" font-size="12" text-anchor="middle" fill="#000" textLength="19" lengthAdjust="spacingAndGlyphs">CC</text></svg>
<!-- ===== SCROLLBAR ===== -->
<div class="abs" style="left:1265px;top:87px;width:15px;height:600px;background:#f1f1f1"></div>
<svg class="abs" style="left:1265px;top:87px" width="15" height="600"><path d="M4 16.5L7.5 12.5L11 16.5Z" fill="#606060"/><path d="M4 590L7.5 594L11 590Z" fill="#606060"/></svg>
<div class="abs" style="left:1267px;top:100px;width:12px;height:466px;background:#c1c1c1"></div>
<!-- ===== TASKBAR ===== -->
<div id="taskbar" class="abs"></div>
<div class="abs" style="left:40px;top:687px;width:287px;height:33px;background:#f0f0f0"></div>
<svg class="abs" style="left:11px;top:695px" width="17" height="17"><path d="M0 2.5L7 1.5V8H0Z M8 1.3L16 0V8H8Z M0 9H7V15.5L0 14.5Z M8 9H16V17L8 15.7Z" fill="#fff"/></svg>
<svg class="abs" style="left:49px;top:695px" width="16" height="16"><circle cx="9.5" cy="6.5" r="4.8" fill="none" stroke="#222" stroke-width="1.3"/><path d="M6 10L1.5 14.5" stroke="#222" stroke-width="1.5"/></svg>
<div class="t" style="left:73px;top:697px;font-size:12.5px;color:#333">Type here to search</div>
<svg class="abs" style="left:336px;top:693px" width="24" height="20"><circle cx="10" cy="10" r="6" fill="none" stroke="#fff" stroke-width="1.6"/></svg>
<svg class="abs" style="left:377px;top:695px" width="20" height="18"><rect x="1.5" y="4" width="11" height="8" fill="none" stroke="#fff" stroke-width="1.3"/><path d="M1 1.5H13 M1 14.5H13 M16 1V16 M14 4H18 M14 12H18" stroke="#fff" stroke-width="1.3"/></svg>
<!-- app icons -->
<svg class="abs" style="left:412px;top:687px" width="420" height="33">
 <!-- explorer -->
 <path d="M6 8H14L16 10H28V25H6Z" fill="#f4c542"/><path d="M6 13H28V25H6Z" fill="#ffd86b"/><rect x="10" y="17" width="14" height="3" fill="#4aa3df"/>
 <rect x="0" y="31" width="35" height="2" fill="#8ac4f0"/>
 <!-- office -->
 <path d="M50 9L58 6V28L50 25Z" fill="#d83b01"/><path d="M54 7L63 9V25L54 28Z" fill="#ea3e23"/><path d="M55 11H60V23H55Z" fill="#a42511"/>
 <!-- word -->
 <rect x="92" y="7" width="17" height="19" rx="1" fill="#2b7cd3"/><rect x="87" y="11" width="11" height="11" fill="#185abd"/><text x="92.5" y="20" font-size="8" font-weight="bold" fill="#fff" text-anchor="middle" font-family="Liberation Sans">W</text>
 <!-- ie -->
 <text x="141" y="25" font-size="24" fill="#1ea1f1" text-anchor="middle" font-family="Liberation Serif" font-style="italic">e</text><ellipse cx="141" cy="16" rx="12" ry="6" fill="none" stroke="#f9c630" stroke-width="1.5" transform="rotate(-30 141 16)"/>
 <!-- ppt -->
 <circle cx="183" cy="16.5" r="9.5" fill="#ed6c47"/><rect x="173" y="11" width="11" height="11" fill="#c43e1c"/><text x="178.5" y="20.5" font-size="8" font-weight="bold" fill="#fff" text-anchor="middle" font-family="Liberation Sans">P</text>
 <rect x="166" y="31" width="35" height="2" fill="#8ac4f0"/>
 <!-- excel -->
 <rect x="217" y="7" width="17" height="19" rx="1" fill="#21a366"/><rect x="213" y="11" width="11" height="11" fill="#107c41"/><text x="218.5" y="20.5" font-size="8" font-weight="bold" fill="#fff" text-anchor="middle" font-family="Liberation Sans">X</text>
 <!-- outlook -->
 <rect x="259" y="8" width="17" height="17" rx="1" fill="#28a8ea"/><rect x="254" y="11" width="11" height="11" fill="#0364b8"/><text x="259.5" y="20.5" font-size="8" font-weight="bold" fill="#fff" text-anchor="middle" font-family="Liberation Sans">O</text>
 <rect x="248" y="31" width="35" height="2" fill="#8ac4f0"/>
 <!-- app -->
 <rect x="296" y="7" width="15" height="19" fill="#e8eef6"/><path d="M298 20L310 10" stroke="#1a3a8a" stroke-width="2"/><rect x="296" y="21" width="15" height="3" fill="#333"/>
 <rect x="290" y="31" width="35" height="2" fill="#8ac4f0"/>
 <!-- chrome 1 -->
 <circle cx="348" cy="16.5" r="9.5" fill="#db4437"/><path d="M348 16.5L339.8 21.3A9.5 9.5 0 0 0 352.8 24.7Z" fill="#0f9d58"/><path d="M348 16.5L352.8 24.7A9.5 9.5 0 0 0 357.5 16.5H348Z" fill="#ffcd40"/><circle cx="348" cy="16.5" r="4.3" fill="#fff"/><circle cx="348" cy="16.5" r="3.3" fill="#4285f4"/><circle cx="353" cy="21" r="4" fill="#fbc02d"/>
 <rect x="334" y="31" width="28" height="2" fill="#8ac4f0"/>
 <!-- chrome active -->
 <rect x="370" y="0" width="40" height="33" fill="#404b5a"/>
 <circle cx="389" cy="16.5" r="9.5" fill="#db4437"/><path d="M389 16.5L380.8 21.3A9.5 9.5 0 0 0 393.8 24.7Z" fill="#0f9d58"/><path d="M389 16.5L393.8 24.7A9.5 9.5 0 0 0 398.5 16.5H389Z" fill="#ffcd40"/><circle cx="389" cy="16.5" r="4.3" fill="#fff"/><circle cx="389" cy="16.5" r="3.3" fill="#4285f4"/><circle cx="394" cy="21" r="3.5" fill="#d8c080"/>
 <rect x="370" y="31" width="40" height="2" fill="#8ac4f0"/>
</svg>
<!-- tray -->
<svg class="abs" style="left:940px;top:687px" width="340" height="33">
 <path d="M5 19L10 14L15 19" fill="none" stroke="#fff" stroke-width="1.3"/>
 <path d="M30 20H45A3.5 3.5 0 0 0 44 13A5 5 0 0 0 35 12A4 4 0 0 0 30 20Z" fill="#2f8ae0"/>
 <path d="M56 20H71A3.5 3.5 0 0 0 70 13A5 5 0 0 0 61 12A4 4 0 0 0 56 20Z" fill="#2f8ae0"/>
 <path d="M82 20H97A3.5 3.5 0 0 0 96 13A5 5 0 0 0 87 12A4 4 0 0 0 82 20Z" fill="#cfd6de"/><circle cx="95" cy="20" r="3" fill="#8aa"/>
 <rect x="108" y="12" width="14" height="8" fill="none" stroke="#fff" stroke-width="1.2"/><rect x="110" y="14" width="10" height="4" fill="#fff"/>
 <path d="M134 13H137L141 10V22L137 19H134Z" fill="none" stroke="#fff" stroke-width="1.1"/><path d="M144 12Q146 16 144 20" fill="none" stroke="#fff" stroke-width="1"/>
 <path d="M161 21H176A4 4 0 0 0 175 13A6 6 0 0 0 164 13A4 4 0 0 0 161 21Z" fill="#fff"/><path d="M168.5 19V14M166 16L168.5 13.5L171 16" stroke="#1f2937" stroke-width="1.3" fill="none"/>
 <path d="M190 11L194 13.5L190 16L186 13.5Z M198 11L202 13.5L198 16L194 13.5Z M190 16.5L194 19L198 16.5L202 19L194 23L186 19Z" fill="#fff"/>
</svg>
<div class="t" style="left:1155px;top:698px;font-size:9.5px;color:#fff">ENG</div>
<div class="t" style="left:1188px;top:690px;font-size:10.2px;color:#fff;letter-spacing:-0.2px">11:04 PM</div>
<div class="t" style="left:1188.5px;top:705px;font-size:10.2px;color:#fff">7/5/2020</div>
<svg class="abs" style="left:1242px;top:691px" width="30" height="28"><path d="M3 3H18V15H9L6 18V15H3Z" fill="#fff"/><path d="M6 7H15M6 10H15" stroke="#1f2937" stroke-width="1"/><circle cx="17.5" cy="17" r="6" fill="#1f2937" stroke="#aaa" stroke-width="1"/><text x="17.5" y="21" font-size="9" font-weight="bold" fill="#fff" text-anchor="middle" font-family="Liberation Sans">2</text></svg>
</body></html>
